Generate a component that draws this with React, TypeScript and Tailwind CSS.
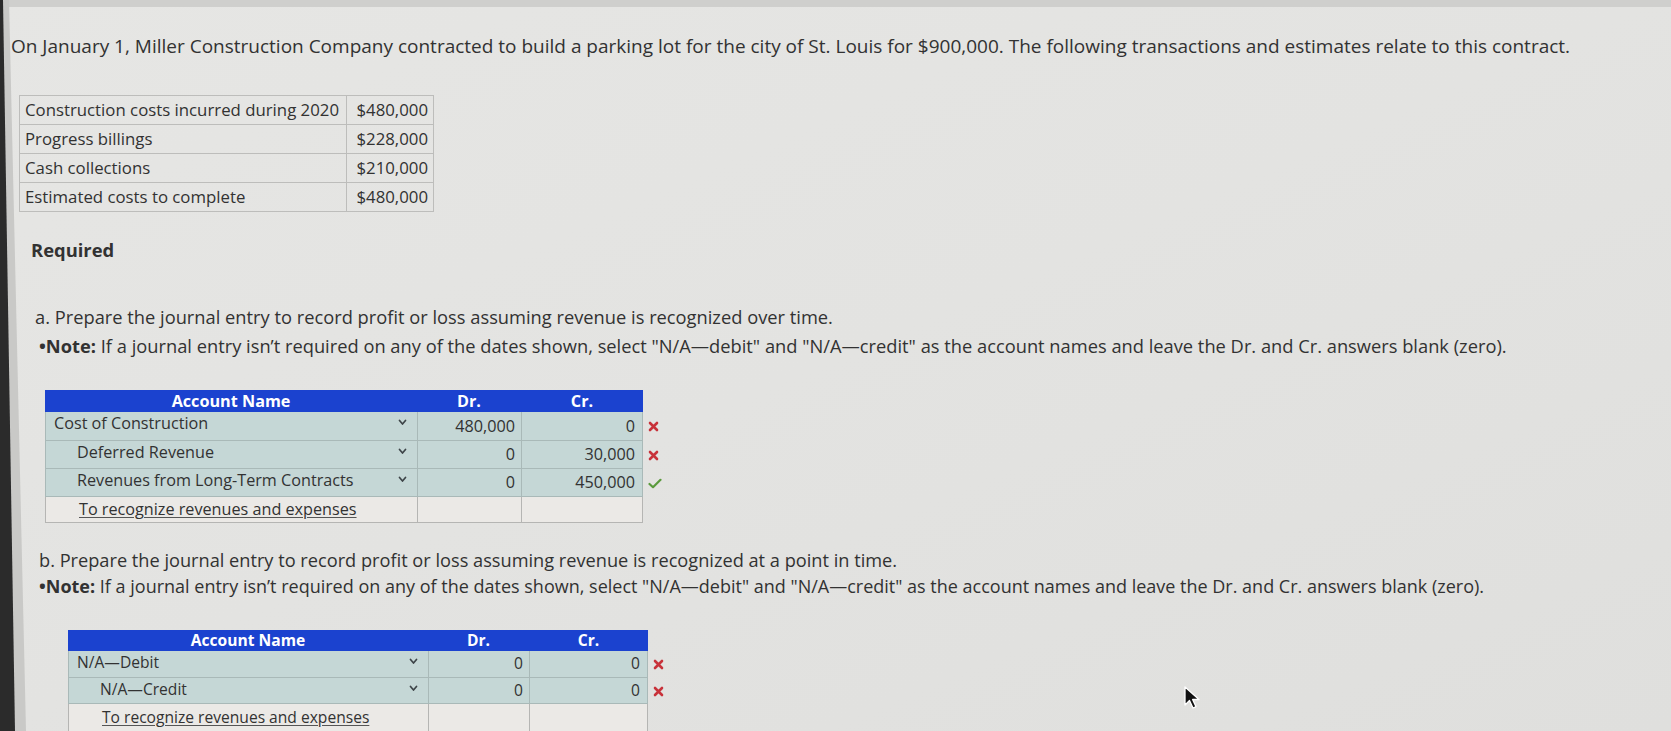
import React from 'react';

type Row = { name: string; indent?: boolean; dr: string; cr: string; mark: 'x' | 'check' };

const XMark = () => (
  <svg width="11" height="11" viewBox="0 0 11 11">
    <path d="M2 2 L9 9 M9 2 L2 9" stroke="#c8323a" strokeWidth="2.6" strokeLinecap="round" />
  </svg>
);

const CheckMark = () => (
  <svg width="14" height="11" viewBox="0 0 14 11">
    <path d="M1.5 6 L5 9.2 L12.5 1.8" stroke="#5a9a3c" strokeWidth="2.2" fill="none" strokeLinecap="round" strokeLinejoin="round" />
  </svg>
);

const Chevron = () => (
  <svg width="9" height="7" viewBox="0 0 9 7">
    <path d="M1.5 1.5 L4.5 5 L7.5 1.5" stroke="#3d4448" strokeWidth="1.7" fill="none" strokeLinecap="round" strokeLinejoin="round" />
  </svg>
);

const JournalTable = ({
  rows,
  widths,
  headerH,
  rowHs,
  size,
}: {
  rows: Row[];
  widths: [number, number, number];
  headerH: number;
  rowHs: number[];
  size: string;
}) => (
  <div className={`flex ${size}`}>
    <div className="flex flex-col">
      <div className="flex bg-[#1b42cf] text-white font-bold" style={{ height: headerH }}>
        <div className="flex items-center justify-center" style={{ width: widths[0] }}>Account Name</div>
        <div className="flex items-center justify-center" style={{ width: widths[1] }}>Dr.</div>
        <div className="flex items-center justify-center" style={{ width: widths[2] }}>Cr.</div>
      </div>
      {rows.map((r, i) => (
        <div key={i} className="flex bg-[#c5d7d6] border-b border-[#a9b9b8]" style={{ height: rowHs[i] }}>
          <div
            className={`flex justify-between border-l border-[#a9b9b8] pr-[10px] leading-[22px] ${r.indent ? 'pl-[31px]' : 'pl-[8px]'}`}
            style={{ width: widths[0] }}
          >
            <span>{r.name}</span>
            <span className="pt-[7px]"><Chevron /></span>
          </div>
          <div className="flex justify-end items-center border-l border-[#a9b9b8] pr-[6px]" style={{ width: widths[1] }}>
            {r.dr}
          </div>
          <div className="flex justify-end items-center border-l border-r border-[#a9b9b8] pr-[7px]" style={{ width: widths[2] }}>
            {r.cr}
          </div>
        </div>
      ))}
      <div className="flex bg-[#ebe9e6] border-b border-[#b5b5b3]" style={{ height: rowHs[rows.length] }}>
        <div className="flex items-center border-l border-[#b5b5b3] pl-[33px]" style={{ width: widths[0] }}>
          <span className="underline decoration-[#555] underline-offset-2">To recognize revenues and expenses</span>
        </div>
        <div className="border-l border-[#b5b5b3]" style={{ width: widths[1] }} />
        <div className="border-l border-r border-[#b5b5b3]" style={{ width: widths[2] }} />
      </div>
    </div>
    <div className="flex flex-col pl-[5px]">
      <div style={{ height: headerH }} />
      {rows.map((r, i) => (
        <div key={i} className="flex items-center" style={{ height: rowHs[i] }}>
          {r.mark === 'x' ? <XMark /> : <CheckMark />}
        </div>
      ))}
    </div>
  </div>
);

const facts = [
  ['Construction costs incurred during 2020', '$480,000'],
  ['Progress billings', '$228,000'],
  ['Cash collections', '$210,000'],
  ['Estimated costs to complete', '$480,000'],
];

const note =
  'If a journal entry isn\u2019t required on any of the dates shown, select "N/A\u2014debit" and "N/A\u2014credit" as the account names and leave the Dr. and Cr. answers blank (zero).';

export default function App() {
  return (
    <div className="relative w-[1671px] h-[731px] overflow-hidden bg-gradient-to-br from-[#e6e6e4] via-[#e3e3e1] to-[#dfdfdd] font-['Open_Sans',sans-serif] text-[#323232]">
      <div className="h-[7px] bg-[#cfcfcd]" />

      <div className="pl-[11px] pt-[27px]">
        <p className="text-[19px] leading-[24px] whitespace-nowrap">
          On January 1, Miller Construction Company contracted to build a parking lot for the city of St. Louis for $900,000. The following transactions and estimates relate to this contract.
        </p>

        <table className="mt-[37px] ml-[8px] border-collapse text-[16.8px]">
          <tbody>
            {facts.map(([label, value]) => (
              <tr key={label} className="h-[29px]">
                <td className="w-[327px] border border-[#bdbdbb] pl-[5px] align-middle whitespace-nowrap">{label}</td>
                <td className="w-[87px] border border-[#bdbdbb] pr-[5px] text-right align-middle">{value}</td>
              </tr>
            ))}
          </tbody>
        </table>

        <p className="mt-[26px] ml-[20px] text-[18.4px] leading-[24px] font-bold">Required</p>

        <p className="mt-[43px] ml-[24px] text-[18.3px] leading-[24px] whitespace-nowrap">
          a. Prepare the journal entry to record profit or loss assuming revenue is recognized over time.
        </p>
        <p className="mt-[5px] ml-[28px] text-[18.3px] leading-[24px] whitespace-nowrap">
          <span className="font-bold">•Note:</span> {note}
        </p>

        <div className="mt-[32px] ml-[34px]">
          <JournalTable
            size="text-[16.2px]"
            widths={[372, 104, 122]}
            headerH={22}
            rowHs={[29, 28, 28, 26]}
            rows={[
              { name: 'Cost of Construction', dr: '480,000', cr: '0', mark: 'x' },
              { name: 'Deferred Revenue', indent: true, dr: '0', cr: '30,000', mark: 'x' },
              { name: 'Revenues from Long-Term Contracts', indent: true, dr: '0', cr: '450,000', mark: 'check' },
            ]}
          />
        </div>

        <p className="mt-[25px] ml-[28px] text-[18.2px] leading-[24px] whitespace-nowrap">
          b. Prepare the journal entry to record profit or loss assuming revenue is recognized at a point in time.
        </p>
        <p className="mt-[2px] ml-[28px] text-[18px] leading-[24px] whitespace-nowrap">
          <span className="font-bold">•Note:</span> {note}
        </p>

        <div className="mt-[32px] ml-[57px]">
          <JournalTable
            size="text-[15.6px]"
            widths={[360, 101, 119]}
            headerH={21}
            rowHs={[27, 26, 28]}
            rows={[
              { name: 'N/A\u2014Debit', dr: '0', cr: '0', mark: 'x' },
              { name: 'N/A\u2014Credit', indent: true, dr: '0', cr: '0', mark: 'x' },
            ]}
          />
        </div>
      </div>

      {/* screen edge on the left of the photo */}
      <svg className="absolute left-0 top-0" width="30" height="731" viewBox="0 0 30 731">
        <polygon points="0,0 9,0 26,731 0,731" fill="#c9c9c7" />
        <polygon points="0,0 3,0 15,731 0,731" fill="#2b2b2b" />
      </svg>

      {/* mouse pointer */}
      <svg className="absolute left-[1183px] top-[685px]" width="20" height="26" viewBox="0 0 20 26">
        <path d="M2 2 L2 20 L6.5 15.5 L10 23 L13 21.6 L9.6 14.5 L16 14.5 Z" fill="#111" stroke="#fff" strokeWidth="1.3" strokeLinejoin="round" />
      </svg>
    </div>
  );
}
